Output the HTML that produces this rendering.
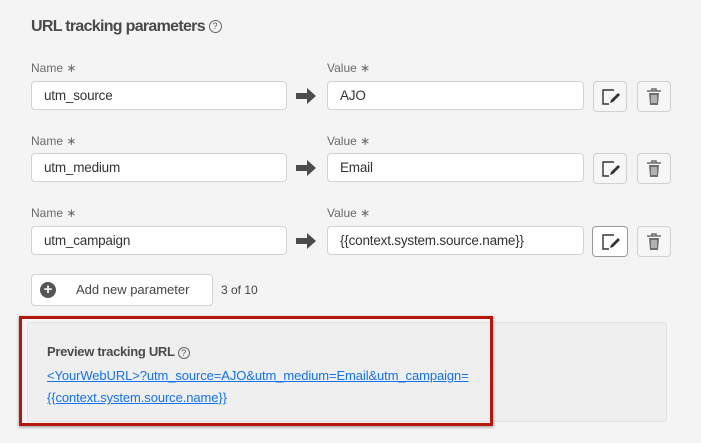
<!DOCTYPE html>
<html><head><style>
body{margin:0;width:701px;height:443px;background:#f4f4f4;font-family:"Liberation Sans",sans-serif;position:relative;overflow:hidden;color:#4b4b4b}
.a{position:absolute}
.t{left:31px;top:18px;font-size:16px;letter-spacing:-0.7px;font-weight:bold;color:#4a4a4a}
.q{display:inline-block;width:11px;height:11px;border:1.3px solid #666;border-radius:50%;font-size:9px;text-align:center;line-height:11px;font-weight:normal;vertical-align:middle;color:#555;letter-spacing:0}
.l{font-size:12px;color:#6a6a6a}
.in{background:#fff;border:1px solid #d3d3d3;border-radius:4px;height:29px;box-sizing:border-box;font-size:13.5px;letter-spacing:-0.2px;color:#333;line-height:28px;padding-left:12px}
.btn{background:#f6f6f6;border:1px solid #d0d0d0;border-radius:4px;height:31px;width:34px;box-sizing:border-box}
</style></head><body>
<div class="a t">URL tracking parameters <span class="q">?</span></div>

<div class="a l" style="left:31px;top:61px">Name ∗</div>
<div class="a l" style="left:327px;top:61px">Value ∗</div>
<div class="a in" style="left:31px;top:81px;width:256px">utm_source</div>
<div class="a in" style="left:327px;top:81px;width:257px">AJO</div>

<div class="a l" style="left:31px;top:134px">Name ∗</div>
<div class="a l" style="left:327px;top:134px">Value ∗</div>
<div class="a in" style="left:31px;top:153px;width:256px">utm_medium</div>
<div class="a in" style="left:327px;top:153px;width:257px">Email</div>

<div class="a l" style="left:31px;top:206px">Name ∗</div>
<div class="a l" style="left:327px;top:206px">Value ∗</div>
<div class="a in" style="left:31px;top:226px;width:256px">utm_campaign</div>
<div class="a in" style="left:327px;top:226px;width:257px">{{context.system.source.name}}</div>

<svg width="0" height="0" style="position:absolute"><defs>
<symbol id="ar" viewBox="0 0 20 16"><path d="M0 5h11V0l9 8-9 8v-5H0z" fill="#4b4b4b"/></symbol>
<symbol id="ed" viewBox="0 0 20 20"><path d="M13 3H2v14h6" fill="none" stroke="#333" stroke-width="1.4"/><path d="M9 16l1-3 7-7 2 2-7 7z" fill="#333"/></symbol>
<symbol id="tr" viewBox="0 0 20 20"><path d="M3 4h14M8 4V2h4v2" stroke="#6e6e6e" stroke-width="1.6" fill="none"/><path d="M5 6h10l-1 12H6z" fill="#6e6e6e"/><path d="M8 8v8M10 8v8M12 8v8" stroke="#f6f6f6" stroke-width="1"/></symbol>
</defs></svg>

<svg class="a" style="left:296px;top:88px" width="20" height="16"><use href="#ar"/></svg>
<svg class="a" style="left:296px;top:160px" width="20" height="16"><use href="#ar"/></svg>
<svg class="a" style="left:296px;top:233px" width="20" height="16"><use href="#ar"/></svg>

<div class="a btn" style="left:593px;top:81px"><svg style="margin:5px 0 0 7px" width="20" height="20"><use href="#ed"/></svg></div>
<div class="a btn" style="left:637px;top:81px"><svg style="margin:5px 0 0 6px" width="20" height="20"><use href="#tr"/></svg></div>
<div class="a btn" style="left:593px;top:153px"><svg style="margin:5px 0 0 7px" width="20" height="20"><use href="#ed"/></svg></div>
<div class="a btn" style="left:637px;top:153px"><svg style="margin:5px 0 0 6px" width="20" height="20"><use href="#tr"/></svg></div>
<div class="a btn" style="left:592px;top:226px;width:36px;background:#fff;border-color:#999"><svg style="margin:5px 0 0 8px" width="20" height="20"><use href="#ed"/></svg></div>
<div class="a btn" style="left:637px;top:226px"><svg style="margin:5px 0 0 6px" width="20" height="20"><use href="#tr"/></svg></div>

<div class="a" style="left:31px;top:274px;width:182px;height:32px;box-sizing:border-box;border:1px solid #d3d3d3;border-radius:4px;background:#fff;font-size:13px;color:#444;line-height:30px">
<span style="position:absolute;left:8px;top:7px;width:16px;height:16px;border-radius:50%;background:#555;color:#fff;font-weight:bold;font-size:15px;line-height:16px;text-align:center">+</span>
<span style="position:absolute;left:44px">Add new parameter</span></div>
<div class="a" style="left:221px;top:283px;font-size:12px;color:#444">3 of 10</div>

<div class="a" style="left:27px;top:322px;width:638px;height:98px;background:#efefef;border:1px solid #e2e2e2;border-radius:4px"></div>
<div class="a" style="left:19px;top:316px;width:468px;height:104px;border:3px solid #b5170c;box-shadow:0 1px 3px rgba(0,0,0,.4)"></div>
<div class="a" style="left:47px;top:344px;font-size:13px;letter-spacing:-0.3px;font-weight:bold;color:#4b4b4b">Preview tracking URL <span class="q" style="width:10px;height:10px;line-height:10px">?</span></div>
<div class="a" style="left:47px;top:365px;font-size:13px;letter-spacing:-0.1px;line-height:22px;color:#1473e6;text-decoration:underline;width:440px">&lt;YourWebURL&gt;?utm_source=AJO&amp;utm_medium=Email&amp;utm_campaign=<br>{{context.system.source.name}}</div>
</body></html>
